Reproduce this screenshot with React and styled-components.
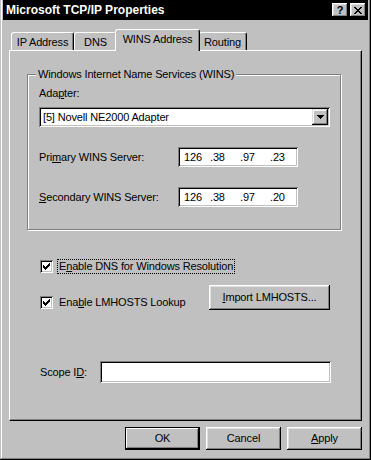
import React from 'react';
import styled, { createGlobalStyle } from 'styled-components';

const Global = createGlobalStyle`
  html, body { margin: 0; padding: 0; background: #c0c0c0; }
  body { font-family: "Liberation Sans", Arial, sans-serif; font-size: 11px; color: #000; letter-spacing: -0.15px; }
  * { box-sizing: border-box; }
`;

const Window = styled.div`
  width: 371px;
  height: 460px;
  background: #c0c0c0;
  padding: 0 3px 3px 3px;
  display: flex;
  flex-direction: column;
  box-shadow: inset -1px -1px #000, inset 1px 0 #c0c0c0, inset -2px -2px #808080, inset 2px 0 #fff;
`;

const TitleBar = styled.div`
  height: 20px;
  background: #000;
  display: flex;
  align-items: center;
  padding: 0 2px 0 3px;
`;

const TitleText = styled.div`
  flex: 1;
  color: #fff;
  font-weight: bold;
  font-size: 12px;
  line-height: 14px;
  letter-spacing: 0;
  white-space: nowrap;
`;

const CaptionButton = styled.div`
  width: 16px;
  height: 14px;
  margin-left: ${(p) => (p.$gap ? '2px' : '0')};
  background: #c0c0c0;
  display: flex;
  align-items: center;
  justify-content: center;
  font-weight: bold;
  font-size: 11px;
  line-height: 11px;
  box-shadow: inset -1px -1px #000, inset 1px 1px #fff, inset -2px -2px #808080, inset 2px 2px #dfdfdf;
`;

const Body = styled.div`
  padding: 9px 6px 0 6px;
  display: flex;
  flex-direction: column;
`;

const TabStrip = styled.div`
  display: flex;
  align-items: flex-end;
  padding-left: 2px;
  position: relative;
  z-index: 2;
  height: 21px;
`;

const Tab = styled.div`
  width: ${(p) => p.$w}px;
  height: ${(p) => (p.$active ? 22 : 18)}px;
  margin: ${(p) => (p.$active ? '0 -2px -1px -2px' : '0')};
  padding-top: ${(p) => (p.$active ? 3 : 3)}px;
  background: #c0c0c0;
  border-top: 1px solid #fff;
  border-left: 1px solid #fff;
  border-right: 1px solid #000;
  border-radius: 3px 3px 0 0;
  box-shadow: inset -1px 0 #808080;
  text-align: center;
  line-height: 13px;
  white-space: nowrap;
  position: relative;
  z-index: ${(p) => (p.$active ? 3 : 1)};
`;

const Panel = styled.div`
  width: 353px;
  height: 371px;
  background: #c0c0c0;
  border-top: 1px solid #fff;
  border-left: 1px solid #fff;
  border-right: 1px solid #000;
  border-bottom: 1px solid #000;
  box-shadow: inset -1px -1px #808080;
  padding: 23px 0 0 17px;
  display: flex;
  flex-direction: column;
  position: relative;
  z-index: 1;
`;

const GroupBox = styled.div`
  width: 314px;
  height: 156px;
  border: 1px solid #808080;
  box-shadow: inset 1px 1px #fff, 1px 1px #fff;
  padding: 12px 0 0 11px;
  position: relative;
  display: flex;
  flex-direction: column;
`;

const Legend = styled.div`
  position: absolute;
  top: -7px;
  left: 8px;
  padding: 0 2px;
  background: #c0c0c0;
  line-height: 13px;
  white-space: nowrap;
`;

const Label = styled.div`
  line-height: 13px;
  white-space: nowrap;
  width: ${(p) => (p.$w ? `${p.$w}px` : 'auto')};
  flex: none;
`;

const Sunken = styled.div`
  background: #fff;
  box-shadow: inset 1px 1px #808080, inset -1px -1px #fff, inset 2px 2px #000, inset -2px -2px #c0c0c0;
`;

const Select = styled(Sunken)`
  width: 291px;
  height: 20px;
  margin-top: 7px;
  display: flex;
  align-items: center;
  padding: 2px 2px 2px 4px;
  line-height: 13px;
`;

const SelectText = styled.div`
  flex: 1;
`;

const DropButton = styled.div`
  width: 16px;
  height: 16px;
  background: #c0c0c0;
  display: flex;
  align-items: center;
  justify-content: center;
  box-shadow: inset -1px -1px #000, inset 1px 1px #dfdfdf, inset -2px -2px #808080, inset 2px 2px #fff;
`;

const FieldRow = styled.div`
  display: flex;
  align-items: center;
  margin-top: 20px;
`;

const IpField = styled(Sunken)`
  width: 120px;
  height: 20px;
  display: flex;
  align-items: center;
  padding-left: 6px;
  line-height: 13px;
`;

const Octet = styled.span`
  width: ${(p) => (p.$first ? 26 : 30)}px;
  flex: none;
  white-space: nowrap;
`;

const CheckRow = styled.div`
  display: flex;
  align-items: center;
  margin-left: 13px;
  margin-top: ${(p) => p.$mt}px;
`;

const CheckBox = styled(Sunken)`
  width: 13px;
  height: 13px;
  flex: none;
  display: flex;
  align-items: center;
  justify-content: center;
`;

const CheckLabel = styled.div`
  margin-left: 4px;
  padding: 0 1px;
  line-height: 13px;
  white-space: nowrap;
  border: 1px ${(p) => (p.$focus ? 'dotted #000' : 'solid transparent')};
`;

const ImportRow = styled.div`
  display: flex;
  align-items: flex-start;
  margin-top: 11px;
`;

const ImportCheck = styled(CheckRow)`
  margin-top: 10px;
  width: 169px;
`;

const Button = styled.div`
  width: ${(p) => p.$w}px;
  height: ${(p) => p.$h}px;
  background: #c0c0c0;
  display: flex;
  align-items: center;
  justify-content: center;
  line-height: 13px;
  white-space: nowrap;
  box-shadow: ${(p) =>
    p.$default
      ? 'inset 0 0 0 1px #000, inset -2px -2px #000, inset 2px 2px #fff, inset -3px -3px #808080'
      : 'inset -1px -1px #000, inset 1px 1px #fff, inset -2px -2px #808080, inset 2px 2px #dfdfdf'};
`;

const ScopeRow = styled.div`
  display: flex;
  align-items: center;
  margin-top: 51px;
  margin-left: 13px;
`;

const ScopeInput = styled(Sunken)`
  width: 231px;
  height: 22px;
`;

const ButtonBar = styled.div`
  display: flex;
  justify-content: flex-end;
  gap: 6px;
  margin-top: 6px;
  width: 353px;
`;

const Check = () => (
  <svg width="7" height="7" viewBox="0 0 7 7" shapeRendering="crispEdges">
    <path d="M0 2h1v1h1v1h1v-1h1v-1h1v-1h1v-1h1v3h-1v1h-1v1h-1v1h-1v1h-1v-1h-1v-1h-1v-1h-1z" fill="#000" />
  </svg>
);

const CloseGlyph = () => (
  <svg width="8" height="7" viewBox="0 0 8 7" shapeRendering="crispEdges">
    <path d="M0 0h2v1h1v1h2v-1h1v-1h2v1h-1v1h-1v1h-1v1h1v1h1v1h1v1h-2v-1h-1v-1h-2v1h-1v1h-2v-1h1v-1h1v-1h1v-1h-1v-1h-1v-1h-1z" fill="#000" />
  </svg>
);

const Arrow = () => (
  <svg width="7" height="4" viewBox="0 0 7 4" shapeRendering="crispEdges">
    <path d="M0 0h7v1h-1v1h-1v1h-1v1h-1v-1h-1v-1h-1v-1h-1z" fill="#000" />
  </svg>
);

export default function App() {
  return (
    <>
      <Global />
      <Window>
        <TitleBar>
          <TitleText>Microsoft TCP/IP Properties</TitleText>
          <CaptionButton>?</CaptionButton>
          <CaptionButton $gap>
            <CloseGlyph />
          </CaptionButton>
        </TitleBar>
        <Body>
          <TabStrip>
            <Tab $w={63}>IP Address</Tab>
            <Tab $w={43}>DNS</Tab>
            <Tab $w={85} $active>WINS Address</Tab>
            <Tab $w={49}>Routing</Tab>
          </TabStrip>
          <Panel>
            <GroupBox>
              <Legend>Windows Internet Name Services (WINS)</Legend>
              <Label>
                Ada<u>p</u>ter:
              </Label>
              <Select>
                <SelectText>[5] Novell NE2000 Adapter</SelectText>
                <DropButton>
                  <Arrow />
                </DropButton>
              </Select>
              <FieldRow>
                <Label $w={139}>
                  Pri<u>m</u>ary WINS Server:
                </Label>
                <IpField>
                  <Octet $first>126</Octet>
                  <Octet>.38</Octet>
                  <Octet>.97</Octet>
                  <Octet>.23</Octet>
                </IpField>
              </FieldRow>
              <FieldRow>
                <Label $w={139}>
                  <u>S</u>econdary WINS Server:
                </Label>
                <IpField>
                  <Octet $first>126</Octet>
                  <Octet>.38</Octet>
                  <Octet>.97</Octet>
                  <Octet>.20</Octet>
                </IpField>
              </FieldRow>
            </GroupBox>
            <CheckRow $mt={29}>
              <CheckBox>
                <Check />
              </CheckBox>
              <CheckLabel $focus>
                E<u>n</u>able DNS for Windows Resolution
              </CheckLabel>
            </CheckRow>
            <ImportRow>
              <ImportCheck>
                <CheckBox>
                  <Check />
                </CheckBox>
                <CheckLabel>
                  Ena<u>b</u>le LMHOSTS Lookup
                </CheckLabel>
              </ImportCheck>
              <Button $w={121} $h={25}>
                <u>I</u>mport LMHOSTS...
              </Button>
            </ImportRow>
            <ScopeRow>
              <Label $w={60}>
                Scope I<u>D</u>:
              </Label>
              <ScopeInput />
            </ScopeRow>
          </Panel>
          <ButtonBar>
            <Button $w={75} $h={23} $default>
              OK
            </Button>
            <Button $w={75} $h={23}>
              Cancel
            </Button>
            <Button $w={75} $h={23}>
              <u>A</u>pply
            </Button>
          </ButtonBar>
        </Body>
      </Window>
    </>
  );
}
